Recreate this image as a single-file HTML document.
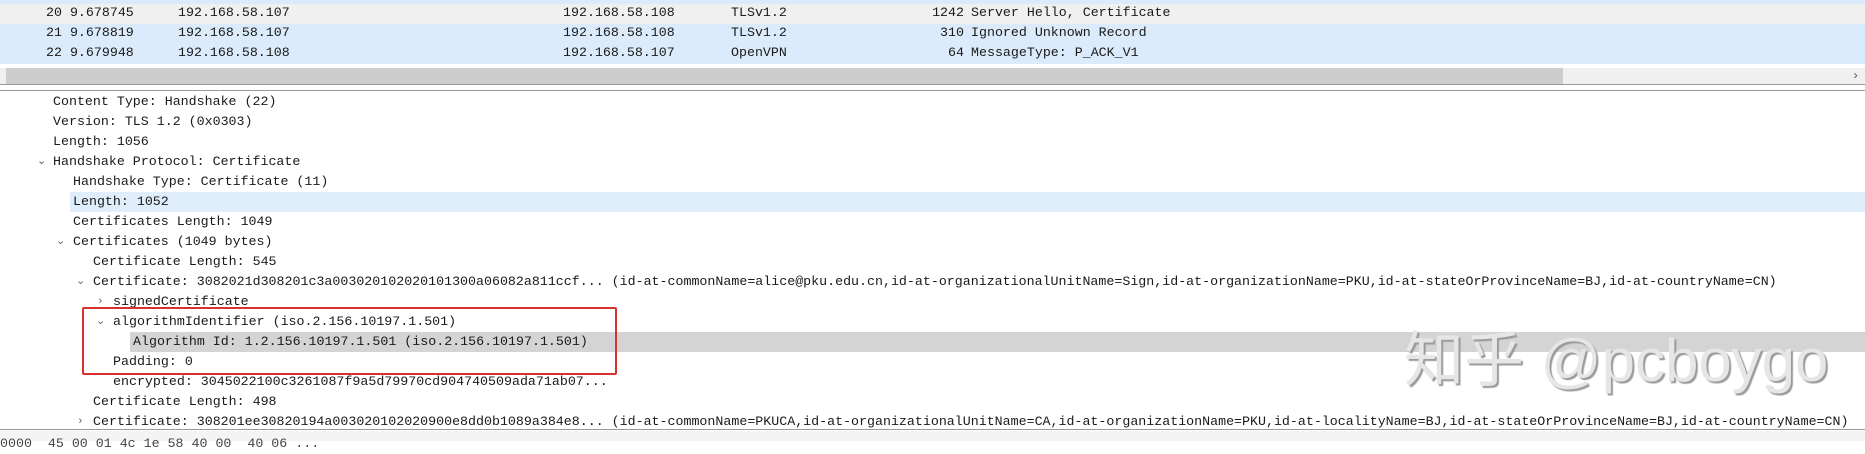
<!DOCTYPE html>
<html><head><meta charset="utf-8"><style>
html,body{margin:0;padding:0;}
body{width:1865px;height:441px;overflow:hidden;position:relative;background:#fff;font-family:"Liberation Mono",monospace;font-size:13.3px;color:#1a1a1a;}
.a{position:absolute;white-space:pre;line-height:20px;}
.band{position:absolute;left:0;width:1865px;}
.arr{position:absolute;font-size:11px;color:#666;line-height:20px;}
</style></head><body>
<div class="band" style="top:0;height:4px;background:#dcebfb"></div>
<div class="band" style="top:4px;height:20px;background:#f0f0f0"></div>
<div class="band" style="top:24px;height:40px;background:#dcebfb"></div>
<div class="band" style="top:64px;height:4px;background:#fff"></div>
<div class="band" style="top:68px;height:16px;background:#f0f0f0"></div>
<div style="position:absolute;left:6px;top:68px;width:1557px;height:16px;background:#cdcdcd"></div>
<div class="a" style="left:1852px;top:66px;font-size:12px;color:#555">›</div>
<div class="band" style="top:84px;height:1px;background:#999"></div>
<div class="band" style="top:90px;height:1px;background:#999"></div>

<div class="a" style="left:46px;top:3px">20 9.678745</div>
<div class="a" style="left:178px;top:3px">192.168.58.107</div>
<div class="a" style="left:563px;top:3px">192.168.58.108</div>
<div class="a" style="left:731px;top:3px">TLSv1.2</div>
<div class="a" style="left:900px;top:3px;width:64px;text-align:right">1242</div>
<div class="a" style="left:971px;top:3px">Server Hello, Certificate</div>

<div class="a" style="left:46px;top:23px">21 9.678819</div>
<div class="a" style="left:178px;top:23px">192.168.58.107</div>
<div class="a" style="left:563px;top:23px">192.168.58.108</div>
<div class="a" style="left:731px;top:23px">TLSv1.2</div>
<div class="a" style="left:900px;top:23px;width:64px;text-align:right">310</div>
<div class="a" style="left:971px;top:23px">Ignored Unknown Record</div>

<div class="a" style="left:46px;top:43px">22 9.679948</div>
<div class="a" style="left:178px;top:43px">192.168.58.108</div>
<div class="a" style="left:563px;top:43px">192.168.58.107</div>
<div class="a" style="left:731px;top:43px">OpenVPN</div>
<div class="a" style="left:900px;top:43px;width:64px;text-align:right">64</div>
<div class="a" style="left:971px;top:43px">MessageType: P_ACK_V1</div>

<div style="position:absolute;left:70px;top:192px;width:1795px;height:20px;background:#e0eefb"></div>
<div style="position:absolute;left:130px;top:332px;width:1735px;height:20px;background:#d4d4d4"></div>

<div class="a" style="left:53px;top:92px">Content Type: Handshake (22)</div>
<div class="a" style="left:53px;top:112px">Version: TLS 1.2 (0x0303)</div>
<div class="a" style="left:53px;top:132px">Length: 1056</div>
<div class="arr" style="left:37px;top:152px">⌄</div>
<div class="a" style="left:53px;top:152px">Handshake Protocol: Certificate</div>
<div class="a" style="left:73px;top:172px">Handshake Type: Certificate (11)</div>
<div class="a" style="left:73px;top:192px">Length: 1052</div>
<div class="a" style="left:73px;top:212px">Certificates Length: 1049</div>
<div class="arr" style="left:56px;top:232px">⌄</div>
<div class="a" style="left:73px;top:232px">Certificates (1049 bytes)</div>
<div class="a" style="left:93px;top:252px">Certificate Length: 545</div>
<div class="arr" style="left:76px;top:272px">⌄</div>
<div class="a" style="left:93px;top:272px">Certificate: 3082021d308201c3a003020102020101300a06082a811ccf... (id-at-commonName=alice@pku.edu.cn,id-at-organizationalUnitName=Sign,id-at-organizationName=PKU,id-at-stateOrProvinceName=BJ,id-at-countryName=CN)</div>
<div class="arr" style="left:97px;top:292px">›</div>
<div class="a" style="left:113px;top:292px">signedCertificate</div>
<div class="arr" style="left:96px;top:312px">⌄</div>
<div class="a" style="left:113px;top:312px">algorithmIdentifier (iso.2.156.10197.1.501)</div>
<div class="a" style="left:133px;top:332px">Algorithm Id: 1.2.156.10197.1.501 (iso.2.156.10197.1.501)</div>
<div class="a" style="left:113px;top:352px">Padding: 0</div>
<div class="a" style="left:113px;top:372px">encrypted: 3045022100c3261087f9a5d79970cd904740509ada71ab07...</div>
<div class="a" style="left:93px;top:392px">Certificate Length: 498</div>
<div class="arr" style="left:77px;top:412px">›</div>
<div class="a" style="left:93px;top:412px">Certificate: 308201ee30820194a003020102020900e8dd0b1089a384e8... (id-at-commonName=PKUCA,id-at-organizationalUnitName=CA,id-at-organizationName=PKU,id-at-localityName=BJ,id-at-stateOrProvinceName=BJ,id-at-countryName=CN)</div>

<div style="position:absolute;left:82px;top:307px;width:531px;height:64px;border:2.5px solid #d8322c;border-radius:2px"></div>

<div class="band" style="top:429px;height:1px;background:#999"></div>
<div class="band" style="top:431px;height:10px;background:#f4f4f4"></div>
<div class="a" style="left:0;top:434px;color:#444">0000  45 00 01 4c 1e 58 40 00  40 06 ...</div>

<div class="a" style="left:1404px;top:326px;line-height:70px;font-family:'Liberation Sans','Noto Sans CJK SC',sans-serif;font-size:60px;color:#e6e6e6;text-shadow:2px 2px 1px #9a9a9a">知乎 @pcboygo</div>
</body></html>
